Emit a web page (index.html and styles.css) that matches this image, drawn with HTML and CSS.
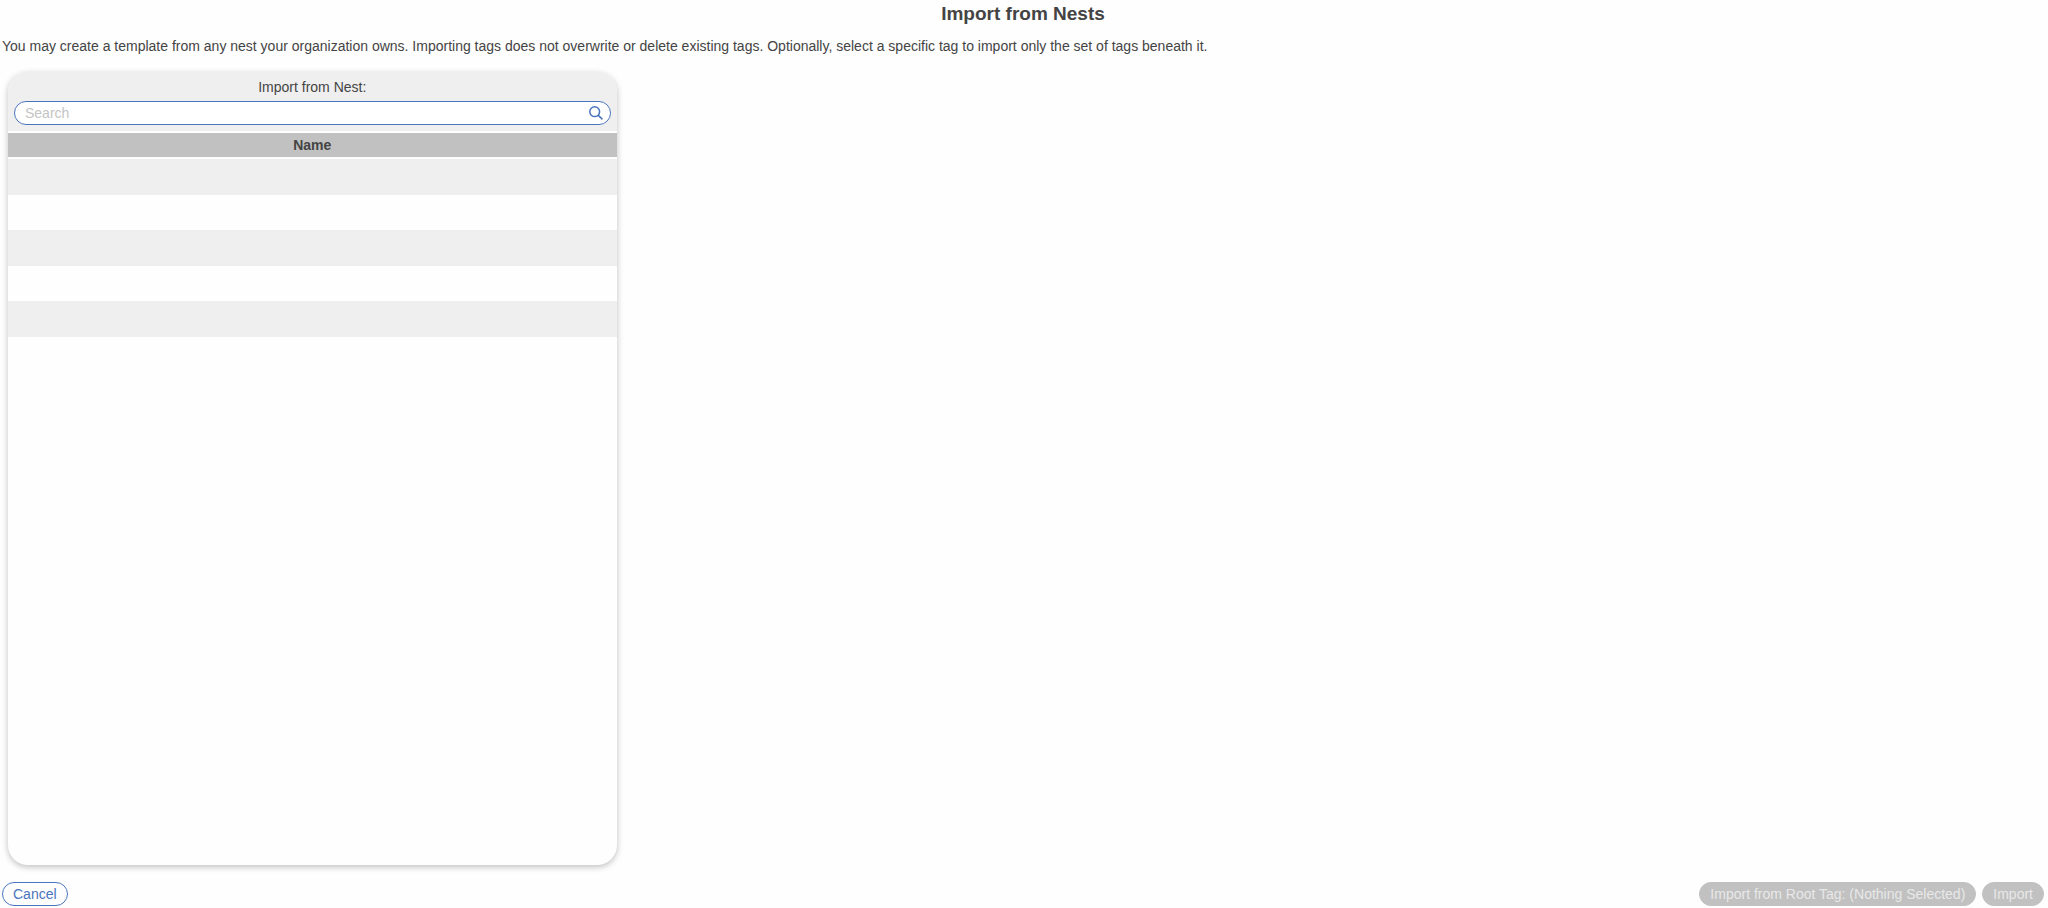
FILE: index.html
```
<!DOCTYPE html>
<html lang="en">
<head>
	<meta charset="UTF-8">
	<title>Import from Nests</title>
	<link rel="stylesheet" href="styles.css">
</head>
<body>

<h1>Import from Nests</h1>

<p class="intro">You may create a template from any nest your organization owns. Importing tags does not overwrite or delete existing tags. Optionally, select a specific tag to import only the set of tags beneath it.</p>

<main class="panel">
	<div class="panel-head">
		<label for="search">Import from Nest:</label>
		<div class="search">
			<input id="search" type="text" placeholder="Search">
			<svg class="icon" viewBox="0 0 14 14" aria-hidden="true">
				<circle cx="5.7" cy="5.7" r="4.9"/>
				<path d="M9.1 9.1L13.4 13.4"/>
			</svg>
		</div>
	</div>

	<table class="nests">
		<thead>
			<tr><th>Name</th></tr>
		</thead>
		<tbody>
			<tr><td></td></tr>
			<tr><td></td></tr>
			<tr><td></td></tr>
			<tr><td></td></tr>
			<tr><td></td></tr>
		</tbody>
	</table>
</main>

<footer class="actions">
	<button type="button">Cancel</button>
	<span class="right">
		<button type="button" disabled>Import from Root Tag: (Nothing Selected)</button>
		<button type="button" disabled>Import</button>
	</span>
</footer>

</body>
</html>
```
FILE: styles.css
```
* {
	box-sizing: border-box;
}

body {
	display: flex;
	flex-direction: column;
	min-height: 100vh;
	margin: 0;
	padding: 0 4px 2px 2px;
	background-color: #fefefe;
	color: #444;
	font-family: "Liberation Sans", Arial, sans-serif;
	font-size: 14px;
	line-height: 20px;
}

h1 {
	margin: 0;
	font-size: 19px;
	line-height: 27px;
	text-align: center;
}

.intro {
	margin: 9px 0 16px;
}

.panel {
	flex: 1;
	width: calc(30% - 4px);
	margin: 0 6px 17px;
	overflow: hidden;
	background-color: #fefefe;
	border-radius: 20px;
	box-shadow: 0 2px 6px rgba(0, 0, 0, 0.25);
}

.panel-head {
	padding: 5px 6px 6px;
	background-color: #efefef;
	text-align: center;
}

.panel-head label {
	display: block;
	margin-bottom: 4px;
}

.search {
	display: flex;
	align-items: center;
	height: 24px;
	padding: 0 7px 0 10px;
	background-color: #fff;
	border: 1px solid #4a75bd;
	border-radius: 12px;
}

.search input {
	flex: 1;
	min-width: 0;
	padding: 0;
	background: none;
	border: none;
	outline: none;
	color: #444;
	font: inherit;
}

.search input::placeholder {
	color: #c4c4c4;
}

.icon {
	width: 14px;
	height: 14px;
	fill: none;
	stroke: #4a75bd;
	stroke-width: 1.5;
}

.nests {
	width: 100%;
	border-spacing: 0;
}

.nests th {
	height: 28px;
	padding: 0;
	background-color: #c1c1c1;
	border-top: 2px solid #fefefe;
	border-bottom: 2px solid #fefefe;
}

.nests td {
	height: 35px;
	padding: 0;
}

.nests tbody tr:nth-child(odd) td {
	height: 36px;
	background-color: #efefef;
}

.actions {
	display: flex;
	justify-content: space-between;
}

.actions .right {
	display: flex;
	gap: 6px;
}

button {
	height: 24px;
	padding: 0 10px;
	background-color: #fefefe;
	border: 1px solid #4a75bd;
	border-radius: 12px;
	color: #4a75bd;
	font: inherit;
}

button:disabled {
	background-color: #c1c1c1;
	border-color: #c1c1c1;
	color: #e8e8e8;
}
```
